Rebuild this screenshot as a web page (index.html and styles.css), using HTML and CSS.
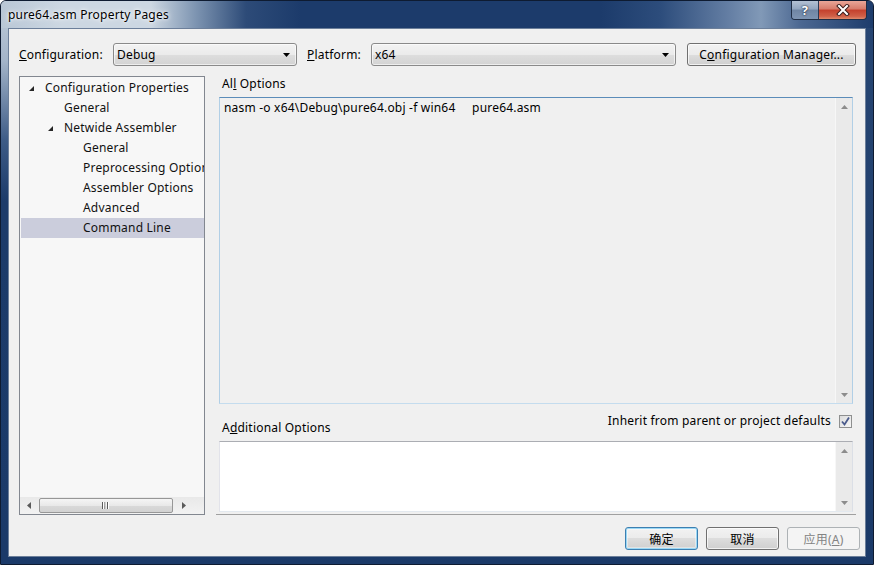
FILE: index.html
```html
<!DOCTYPE html>
<html lang="en">
<head>
    <meta charset="UTF-8">
    <title>pure64.asm Property Pages</title>
    <link rel="stylesheet" href="styles.css">
</head>
<body>
<div class="window">
    <div class="titlebar">
        <span class="title">pure64.asm Property Pages</span>
        <div class="caption-btns">
            <span class="cap help">?</span>
            <span class="cap close">
                <svg width="14" height="12" viewBox="0 0 14 12">
                    <path d="M3 2 L11 10 M11 2 L3 10" stroke="#3a1c1c" stroke-width="4" stroke-linecap="square"/>
                    <path d="M3 2 L11 10 M11 2 L3 10" stroke="#fff" stroke-width="2" stroke-linecap="square"/>
                </svg>
            </span>
        </div>
    </div>

    <div class="client">
        <div class="toolbar">
            <span class="lbl lbl-config"><u>C</u>onfiguration:</span>
            <div class="combo combo-config">
                <span>Debug</span>
                <svg width="7" height="4" viewBox="0 0 7 4"><polygon points="0,0 7,0 3.5,4" fill="#000"/></svg>
            </div>
            <span class="lbl lbl-platform"><u>P</u>latform:</span>
            <div class="combo combo-platform">
                <span>x64</span>
                <svg width="7" height="4" viewBox="0 0 7 4"><polygon points="0,0 7,0 3.5,4" fill="#000"/></svg>
            </div>
            <button class="btn btn-manager">C<u>o</u>nfiguration Manager...</button>
        </div>

        <div class="main">
            <div class="tree">
                <ul class="tree-list">
                    <li class="node lvl0"><span class="exp"><svg width="5" height="5" viewBox="0 0 5 5"><polygon points="5,0 5,5 0,5" fill="#262626"/></svg></span>Configuration Properties</li>
                    <li class="node lvl1"><span class="exp"></span>General</li>
                    <li class="node lvl1"><span class="exp"><svg width="5" height="5" viewBox="0 0 5 5"><polygon points="5,0 5,5 0,5" fill="#262626"/></svg></span>Netwide Assembler</li>
                    <li class="node lvl2"><span class="exp"></span>General</li>
                    <li class="node lvl2"><span class="exp"></span>Preprocessing Options</li>
                    <li class="node lvl2"><span class="exp"></span>Assembler Options</li>
                    <li class="node lvl2"><span class="exp"></span>Advanced</li>
                    <li class="node lvl2 selected"><span class="exp"></span>Command Line</li>
                </ul>
                <div class="hscroll">
                    <span class="sbtn">
                        <svg width="4" height="7" viewBox="0 0 4 7"><polygon points="4,0 4,7 0,3.5" fill="#5a5a5a"/></svg>
                    </span>
                    <div class="hthumb">
                        <svg width="8" height="7" viewBox="0 0 8 7">
                            <path d="M0.5 0 V7 M3 0 V7 M5.5 0 V7" stroke="#5c5c5c" stroke-width="1"/>
                            <path d="M1.5 0 V7 M4 0 V7 M6.5 0 V7" stroke="#ffffff" stroke-width="1"/>
                        </svg>
                    </div>
                    <span class="sbtn">
                        <svg width="4" height="7" viewBox="0 0 4 7"><polygon points="0,0 0,7 4,3.5" fill="#5a5a5a"/></svg>
                    </span>
                </div>
            </div>

            <div class="props">
                <div class="field-label">Al<u>l</u> Options</div>
                <div class="textbox all-options">
                    <div class="text">nasm -o x64\Debug\pure64.obj -f win64     pure64.asm</div>
                    <div class="vscroll">
                        <span class="vbtn"><svg width="7" height="4" viewBox="0 0 7 4"><polygon points="0,4 7,4 3.5,0" fill="#8c8c8c"/></svg></span>
                        <span class="vbtn"><svg width="7" height="4" viewBox="0 0 7 4"><polygon points="0,0 7,0 3.5,4" fill="#8c8c8c"/></svg></span>
                    </div>
                </div>
                <div class="options-row">
                    <span class="field-label additional-label">A<u>d</u>ditional Options</span>
                    <span class="inherit">
                        Inherit from parent or project defaults
                        <span class="checkbox">
                            <svg width="11" height="11" viewBox="0 0 11 11"><path d="M2 5.5 L4.5 8.5 L9 1.5" stroke="#4a5b8c" stroke-width="1.8" fill="none"/></svg>
                        </span>
                    </span>
                </div>
                <div class="textbox additional">
                    <div class="text"></div>
                    <div class="vscroll">
                        <span class="vbtn"><svg width="7" height="4" viewBox="0 0 7 4"><polygon points="0,4 7,4 3.5,0" fill="#8c8c8c"/></svg></span>
                        <span class="vbtn"><svg width="7" height="4" viewBox="0 0 7 4"><polygon points="0,0 7,0 3.5,4" fill="#8c8c8c"/></svg></span>
                    </div>
                </div>
                <div class="separator"></div>
            </div>
        </div>

        <div class="footer">
            <button class="btn btn-default">确定</button>
            <button class="btn">取消</button>
            <button class="btn btn-disabled">应用(<u>A</u>)</button>
        </div>
    </div>
</div>
</body>
</html>
```

FILE: styles.css
```css
body {
    margin: 0;
    background: #ffffff;
    font-family: "Noto Sans", "Noto Sans CJK SC", sans-serif;
    font-size: 12px;
    letter-spacing: 0.2px;
    color: #000;
}
.window {
    width: 874px;
    height: 565px;
    box-sizing: border-box;
    border: 1px solid #0e1b31;
    border-radius: 6px 6px 0 0;
    background:
        linear-gradient(to bottom, #c2cedb 0, #a3b4c9 60px, #3d5b86 140px, #1c3b6a 200px, #1b3a69 100%) left top / 7px 100% no-repeat,
        linear-gradient(to bottom, #274673 0, #1b3a69 100%);
    display: flex;
    flex-direction: column;
    overflow: hidden;
}
.titlebar {
    height: 27px;
    flex: none;
    display: flex;
    justify-content: space-between;
    align-items: flex-start;
    background: linear-gradient(to right, #b9c7d6 0, #ccd7e2 60px, #ccd7e2 150px, #7d94b1 195px, #2d4b78 245px, #1c3b6b 300px, #1c3b6b 600px, #2d4d7c 660px, #6680a5 730px, #8199b7 760px, #4b6791 800px, #1d3c6c 872px);
}
.title {
    padding: 5px 0 0 7px;
    line-height: 18px;
    font-size: 12px;
    color: #000;
    text-shadow: 0 0 6px #ffffff, 0 0 3px #ffffff;
}
.caption-btns {
    display: flex;
    margin-right: 6px;
    border: 1px solid #202e45;
    border-top: none;
    border-radius: 0 0 4px 4px;
    overflow: hidden;
}
.cap {
    height: 18px;
    display: flex;
    align-items: center;
    justify-content: center;
}
.help {
    width: 26px;
    border-right: 1px solid #2a3a55;
    background: linear-gradient(to bottom, #b3c1d3 0, #92a5bf 45%, #6f85a4 50%, #7e94b2 100%);
    color: #fff;
    font-weight: bold;
    font-size: 13px;
    text-shadow: 0 0 2px #1e2a3e, 0 0 1px #1e2a3e;
}
.close {
    width: 47px;
    background: linear-gradient(to bottom, #e9a698 0, #d77a6a 45%, #c4402c 50%, #cf6048 85%, #e08a6c 100%);
}
.client {
    flex: 1;
    margin: 0 7px 7px 7px;
    background: #f0f0f0;
    border: 1px solid #6c7f9a;
    display: flex;
    flex-direction: column;
    padding: 14px 5px 6px 10px;
}
.toolbar {
    display: flex;
    align-items: center;
    height: 23px;
}
.lbl {
    line-height: 23px;
}
.lbl-config {
    width: 94px;
}
.lbl-platform {
    width: 64px;
    margin-left: 10px;
}
.combo {
    height: 23px;
    box-sizing: border-box;
    border: 1px solid #8a8a8a;
    border-radius: 3px;
    background: linear-gradient(to bottom, #f3f3f3 0, #ebebeb 50%, #dedede 50%, #d3d3d3 100%);
    box-shadow: inset 0 0 0 1px rgba(255, 255, 255, 0.6);
    display: flex;
    align-items: center;
    justify-content: space-between;
    padding: 0 6px 0 3px;
}
.combo-config {
    width: 184px;
}
.combo-platform {
    width: 305px;
}
.btn {
    height: 23px;
    box-sizing: border-box;
    border: 1px solid #707070;
    border-radius: 3px;
    background: linear-gradient(to bottom, #f2f2f2 0, #ebebeb 50%, #dddddd 50%, #cfcfcf 100%);
    box-shadow: inset 0 0 0 1px rgba(255, 255, 255, 0.7);
    font-family: "Noto Sans", "Noto Sans CJK SC", sans-serif;
    font-size: 12px;
    letter-spacing: 0.2px;
    color: #000;
    padding: 0;
}
.btn-manager {
    width: 169px;
    margin-left: 11px;
}
.main {
    display: flex;
    height: 439px;
    margin-top: 10px;
}
.tree {
    width: 186px;
    box-sizing: border-box;
    border: 1px solid #828790;
    background: #f7f7f7;
    display: flex;
    flex-direction: column;
}
.tree-list {
    flex: 1;
    list-style: none;
    margin: 0;
    padding: 1px 0 0 1px;
    overflow: hidden;
}
.node {
    height: 20px;
    line-height: 20px;
    white-space: nowrap;
    overflow: hidden;
    color: #111;
}
.node.lvl0 { padding-left: 8px; }
.node.lvl1 { padding-left: 27px; }
.node.lvl2 { padding-left: 46px; }
.node.selected {
    background: #cbcddc;
}
.exp {
    display: inline-block;
    width: 16px;
    vertical-align: top;
}
.exp svg {
    display: block;
    margin-top: 8px;
}
.hscroll {
    height: 17px;
    display: flex;
    align-items: center;
    background: linear-gradient(to bottom, #e9e9e9 0, #f2f2f2 100%);
}
.sbtn {
    width: 17px;
    height: 17px;
    display: flex;
    align-items: center;
    justify-content: center;
}
.hthumb {
    width: 134px;
    height: 15px;
    box-sizing: border-box;
    margin: 0 2px 0 2px;
    border: 1px solid #979797;
    border-radius: 2px;
    background: linear-gradient(to bottom, #f5f5f5 0, #e9e9e9 50%, #d9d9d9 51%, #d2d2d2 100%);
    display: flex;
    align-items: center;
    justify-content: center;
}
.props {
    width: 640px;
    margin-left: 11px;
    box-sizing: border-box;
    padding: 0 3px 0 3px;
    display: flex;
    flex-direction: column;
}
.field-label {
    height: 21px;
    line-height: 16px;
    padding-left: 3px;
}
.textbox {
    display: flex;
    box-sizing: border-box;
    border: 1px solid;
}
.textbox .text {
    flex: 1;
    padding: 2px 4px;
    line-height: 16px;
    white-space: pre;
}
.all-options {
    height: 307px;
    background: #f0f0f0;
    border-color: #5b8cb9 #b1cfe6 #c4dcee #b1cfe6;
}
.additional {
    height: 71px;
    background: #ffffff;
    border-color: #abadb3 #dbdfe6 #e3e9ef #e2e3ea;
}
.vscroll {
    width: 17px;
    display: flex;
    flex-direction: column;
    justify-content: space-between;
    background: #eaeaea;
    border-left: 1px solid #f7f7f7;
    box-sizing: border-box;
}
.vbtn {
    height: 17px;
    display: flex;
    align-items: center;
    justify-content: center;
}
.options-row {
    height: 37px;
    display: flex;
    justify-content: space-between;
}
.additional-label {
    align-self: flex-end;
    height: auto;
    margin-bottom: 5px;
}
.inherit {
    align-self: flex-start;
    margin-top: 10px;
    display: flex;
    align-items: center;
    line-height: 14px;
}
.checkbox {
    width: 13px;
    height: 13px;
    box-sizing: border-box;
    margin-left: 8px;
    margin-right: 1px;
    border: 1px solid #8e8f8f;
    background: linear-gradient(to bottom right, #dcdcdc 0, #f6f6f6 100%);
    display: flex;
    align-items: center;
    justify-content: center;
}
.separator {
    margin-top: auto;
    margin-left: -3px;
    margin-right: -3px;
    height: 1px;
    background: #a0a0a0;
}
.footer {
    display: flex;
    justify-content: flex-end;
    gap: 8px;
    margin-top: 12px;
}
.footer .btn {
    width: 73px;
}
.btn-default {
    border-color: #3c7fb1;
    box-shadow: inset 0 0 0 1px #9bd8f5, inset 0 0 0 2px rgba(255, 255, 255, 0.4);
}
.btn-disabled {
    border-color: #adb2b5;
    background: #f4f4f4;
    box-shadow: none;
    color: #838383;
}
```
